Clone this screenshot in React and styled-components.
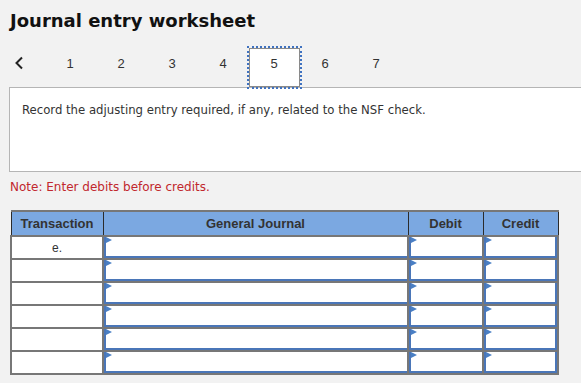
import React from 'react';
import styled, { createGlobalStyle } from 'styled-components';

const GlobalStyle = createGlobalStyle`
	html, body {
		margin: 0;
		padding: 0;
		background: #f2f2f2;
		overflow: hidden;
	}
`;

const Page = styled.div`
	width: 581px;
	height: 383px;
	padding: 0 0 0 10px;
	box-sizing: border-box;
	font-family: 'DejaVu Sans', Verdana, sans-serif;
	color: #333;
`;

const Title = styled.h1`
	margin: 0;
	padding-top: 10px;
	font-size: 18px;
	line-height: 22px;
	font-weight: bold;
	color: #111;
`;

const TabBar = styled.div`
	display: flex;
	align-items: stretch;
	height: 39px;
	margin-top: 16px;
	margin-left: -10px;
	position: relative;
	z-index: 1;
`;

const Prev = styled.button`
	width: 44.5px;
	border: none;
	background: none;
	padding: 8px 0 0 14px;
	display: flex;
	align-items: flex-start;
	justify-content: flex-start;
	cursor: pointer;
`;

const Tab = styled.div`
	width: 51px;
	display: flex;
	align-items: flex-start;
	justify-content: center;
	padding-top: 7px;
	box-sizing: border-box;
	font-family: 'Liberation Sans', Arial, sans-serif;
	font-size: 13px;
	line-height: 15px;
	color: #333;
	background: ${(props) => (props.active ? '#fff' : 'transparent')};
	border: 1px solid ${(props) => (props.active ? '#8a8a8a' : 'transparent')};
	outline: ${(props) => (props.active ? '2px dotted #3f72c0' : 'none')};
`;

const Prompt = styled.div`
	width: 600px;
	height: 85px;
	margin-left: -1px;
	box-sizing: border-box;
	background: #fff;
	border: 1px solid #b5b5b5;
	padding: 14px 12px;
	font-family: 'DejaVu Sans Condensed', 'DejaVu Sans', Tahoma, sans-serif;
	font-size: 13px;
`;

const Note = styled.p`
	margin: 7px 0 0;
	font-size: 12px;
	line-height: 16px;
	color: #c1272d;
`;

const Table = styled.table`
	margin-top: 15px;
	width: 547px;
	border-collapse: collapse;
	table-layout: fixed;
	font-family: 'Liberation Sans', Arial, sans-serif;
`;

const Head = styled.th`
	height: 23px;
	padding: 0;
	background: #7ba8e1;
	border: 1px solid #2b2b2b;
	border-top: 2px solid #777;
	font-size: 13px;
	font-weight: bold;
	color: #333;
	text-align: center;
`;

const Cell = styled.td`
	height: 21px;
	padding: 0;
	background: #fff;
	border: 2px solid #777;
	font-size: 12px;
	text-align: center;
	color: #333;
`;

const EntryCell = styled.td`
	height: 21px;
	padding: 0;
	background: #fff;
	border: 2px solid #777;
	border-left-width: 1px;
`;

const Entry = styled.div`
	position: relative;
	height: 21px;
	box-sizing: border-box;
	border-left: 2px solid #4a76b8;
	border-bottom: 2px solid #4a76b8;
	border-right: ${(props) => (props.last ? '2px solid #4a76b8' : 'none')};

	&::before {
		content: '';
		position: absolute;
		left: 0;
		top: 0;
		border-top: 3px solid transparent;
		border-bottom: 3px solid transparent;
		border-left: 6px solid #4a7fc4;
	}
`;

const rows = ['e.', '', '', '', '', ''];

function App() {
	return (
		<Page>
			<GlobalStyle />
			<Title>Journal entry worksheet</Title>
			<TabBar>
				<Prev aria-label="previous">
					<svg width="10" height="14" viewBox="0 0 10 14">
						<path d="M8 1.5 L2.5 7 L8 12.5" fill="none" stroke="#222" strokeWidth="2" />
					</svg>
				</Prev>
				{[1, 2, 3, 4, 5, 6, 7].map((n) => (
					<Tab key={n} active={n === 5}>
						{n}
					</Tab>
				))}
			</TabBar>
			<Prompt>Record the adjusting entry required, if any, related to the NSF check.</Prompt>
			<Note>Note: Enter debits before credits.</Note>
			<Table>
				<colgroup>
					<col style={{ width: 92 }} />
					<col style={{ width: 305 }} />
					<col style={{ width: 75 }} />
					<col style={{ width: 75 }} />
				</colgroup>
				<thead>
					<tr>
						<Head>Transaction</Head>
						<Head>General Journal</Head>
						<Head>Debit</Head>
						<Head>Credit</Head>
					</tr>
				</thead>
				<tbody>
					{rows.map((t, i) => (
						<tr key={i}>
							<Cell>{t}</Cell>
							<EntryCell>
								<Entry />
							</EntryCell>
							<EntryCell>
								<Entry />
							</EntryCell>
							<EntryCell>
								<Entry last />
							</EntryCell>
						</tr>
					))}
				</tbody>
			</Table>
		</Page>
	);
}

export default App;
